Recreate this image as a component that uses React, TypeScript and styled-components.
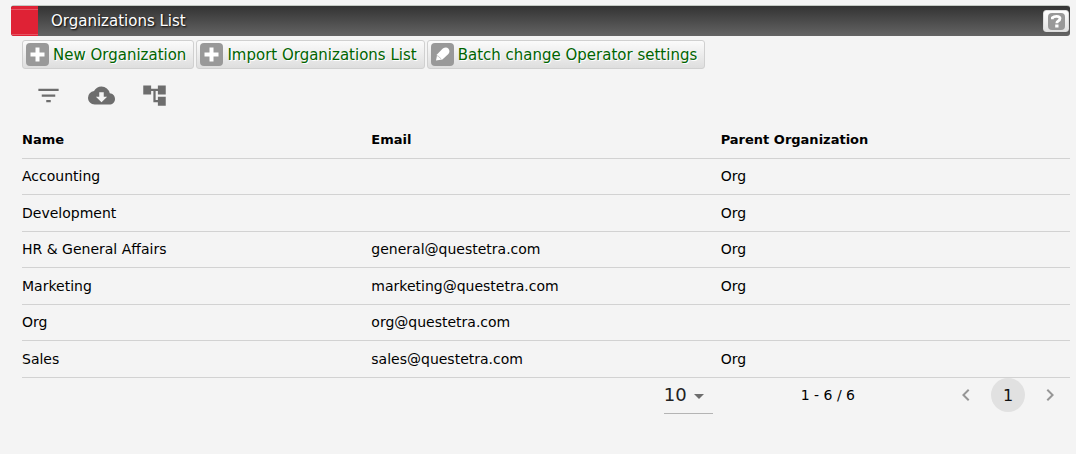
import React from "react";
import styled, { createGlobalStyle } from "styled-components";
import {
  MdAccountTree,
  MdArrowDropDown,
  MdChevronLeft,
  MdChevronRight,
  MdCloudDownload,
  MdFilterList,
} from "react-icons/md";

const GlobalStyle = createGlobalStyle`
  * { box-sizing: border-box; }
  body {
    margin: 0;
    background: #f4f4f4;
    color: #000;
    font-family: Verdana, "DejaVu Sans", sans-serif;
    font-size: 14px;
  }
  button, select { font-family: inherit; }
`;

const Page = styled.main`
  padding: 5px 6px 0 11px;
`;

const TitleBar = styled.header`
  display: flex;
  align-items: center;
  height: 31px;
  border-top: 1px solid #c3c9c3;
  border-radius: 3px;
  background: linear-gradient(#333, #646464);
  overflow: hidden;
`;

const Marker = styled.span`
  align-self: stretch;
  width: 27px;
  padding: 3px 0;
  background: #df2235;

  &::before {
    content: "";
    display: block;
    height: 100%;
    border: solid #e65563;
    border-width: 1px 0;
  }
`;

const Title = styled.h1`
  flex: 1;
  margin: 0;
  padding-left: 13px;
  color: #fff;
  font-size: 15px;
  font-weight: 400;
  line-height: 28px;
  text-shadow: 1px 1px 2px #000;
`;

const HelpButton = styled.button`
  display: flex;
  align-items: center;
  justify-content: center;
  width: 26px;
  height: 22px;
  margin-right: 1px;
  padding: 0;
  border: 1px solid #ddd;
  border-radius: 3px;
  background: linear-gradient(#fff, #e2e2e2);
`;

const Content = styled.section`
  padding-left: 11px;
`;

const ActionBar = styled.div`
  display: flex;
  gap: 2px;
  padding-top: 4px;
`;

const ActionButton = styled.button`
  display: flex;
  align-items: center;
  gap: 4px;
  height: 29px;
  padding: 0 7px 0 3px;
  border: 1px solid #d0d0d0;
  border-radius: 3px;
  background: linear-gradient(#fbfbfb, #dedede);
  color: #006400;
  font-size: 15px;
  line-height: 24px;
  text-shadow: 1px 1px 0 #fff;
  white-space: nowrap;
`;

const IconBar = styled.div`
  display: flex;
  gap: 26px;
  padding: 13px 13px 12px;
`;

const IconButton = styled.button`
  display: flex;
  padding: 0;
  border: 0;
  background: none;
  color: #6d6d6d;
`;

const Table = styled.table`
  width: 100%;
  table-layout: fixed;
  border-collapse: separate;
  border-spacing: 0;
  text-align: left;

  th, td {
    height: 36px;
    padding: 0;
    border-bottom: 1px solid #d2d2d2;
    line-height: 20px;
  }
  th {
    height: 38px;
    font-size: 13px;
  }
  tbody tr:nth-child(odd) td { padding-bottom: 2px; }
  tbody tr:nth-child(even) td { height: 37px; }
`;

const Pager = styled.nav`
  display: flex;
  align-items: flex-start;
  justify-content: flex-end;
`;

const SizeField = styled.label`
  display: flex;
  align-items: center;
  width: 49px;
  height: 36px;
  margin-right: 88px;
  border-bottom: 1px solid #b4b4b4;
  color: #6d6d6d;

  select {
    width: 49px;
    height: 34px;
    padding: 0 0 2px;
    border: 0;
    appearance: none;
    background: none;
    color: #222;
    font-size: 18px;
  }
  svg {
    flex: none;
    margin-left: -26px;
    pointer-events: none;
  }
`;

const Range = styled.span`
  margin-right: 94px;
  line-height: 34px;
`;

const PageButton = styled.button<{ $current?: boolean }>`
  display: flex;
  align-items: center;
  justify-content: center;
  width: 34px;
  height: 34px;
  padding: 0;
  border: 0;
  border-radius: 50%;
  background: ${(p) => (p.$current ? "#e1e1e1" : "none")};
  color: ${(p) => (p.$current ? "#111" : "#969696")};
  font-size: 16px;
`;

const PageButtons = styled.div`
  display: flex;
  gap: 8px;
  margin-right: 3px;
`;

const PlusIcon = () => (
  <svg width="23" height="23" viewBox="0 0 23 23" aria-hidden="true">
    <rect width="23" height="23" rx="4" fill="#999" />
    <path d="M9.5 4.5h4v5h5v4h-5v5h-4v-5h-5v-4h5z" fill="#fff" />
  </svg>
);

const PencilIcon = () => (
  <svg width="23" height="23" viewBox="0 0 23 23" aria-hidden="true">
    <rect width="23" height="23" rx="4" fill="#999" />
    <path d="M5 17.5l1.2-6.3 5.6-5.7q3.5-2.3 5.7.2 1.9 2.6-.1 5.3l-6 5.4z" fill="#fff" />
    <path d="M5.8 12.6q2 .2 2.2 1.6 1.6.2 2 2.2" fill="none" stroke="#ccc" />
  </svg>
);

const HelpIcon = () => (
  <svg width="17" height="17" viewBox="0 0 17 17" aria-hidden="true">
    <rect width="17" height="17" rx="4" fill="#999" />
    <path d="M4.4 6.2V4.8q1.4-1.5 4-1.5 3.6 0 3.6 2.3 0 1.4-1.8 2.3-1.4.7-1.4 2.3" fill="none" stroke="#fff" strokeWidth="2.8" />
    <path d="M7.2 11.4h3.3v3H7.2z" fill="#fff" />
  </svg>
);

const actions = [
  { label: "New Organization", icon: <PlusIcon /> },
  { label: "Import Organizations List", icon: <PlusIcon /> },
  { label: "Batch change Operator settings", icon: <PencilIcon /> },
];

const rows = [
  ["Accounting", "", "Org"],
  ["Development", "", "Org"],
  ["HR & General Affairs", "general@questetra.com", "Org"],
  ["Marketing", "marketing@questetra.com", "Org"],
  ["Org", "org@questetra.com", ""],
  ["Sales", "sales@questetra.com", "Org"],
];

export default function App() {
  return (
    <Page>
      <GlobalStyle />
      <TitleBar>
        <Marker />
        <Title>Organizations List</Title>
        <HelpButton type="button" aria-label="Help"><HelpIcon /></HelpButton>
      </TitleBar>
      <Content>
        <ActionBar>
          {actions.map((a) => (
            <ActionButton type="button" key={a.label}>{a.icon}{a.label}</ActionButton>
          ))}
        </ActionBar>
        <IconBar>
          <IconButton type="button" aria-label="Filter"><MdFilterList size={27} /></IconButton>
          <IconButton type="button" aria-label="Download"><MdCloudDownload size={27} /></IconButton>
          <IconButton type="button" aria-label="Tree view"><MdAccountTree size={27} /></IconButton>
        </IconBar>
        <Table>
          <thead>
            <tr>
              <th scope="col">Name</th>
              <th scope="col">Email</th>
              <th scope="col">Parent Organization</th>
            </tr>
          </thead>
          <tbody>
            {rows.map(([name, email, parent]) => (
              <tr key={name}>
                <td>{name}</td>
                <td>{email}</td>
                <td>{parent}</td>
              </tr>
            ))}
          </tbody>
        </Table>
        <Pager aria-label="Pagination">
          <SizeField>
            <select aria-label="Rows per page" defaultValue="10">
              <option>10</option>
              <option>20</option>
              <option>50</option>
            </select>
            <MdArrowDropDown size={24} />
          </SizeField>
          <Range>1 - 6 / 6</Range>
          <PageButtons>
            <PageButton type="button" aria-label="Previous page"><MdChevronLeft size={24} /></PageButton>
            <PageButton type="button" $current aria-current="page">1</PageButton>
            <PageButton type="button" aria-label="Next page"><MdChevronRight size={24} /></PageButton>
          </PageButtons>
        </Pager>
      </Content>
    </Page>
  );
}
